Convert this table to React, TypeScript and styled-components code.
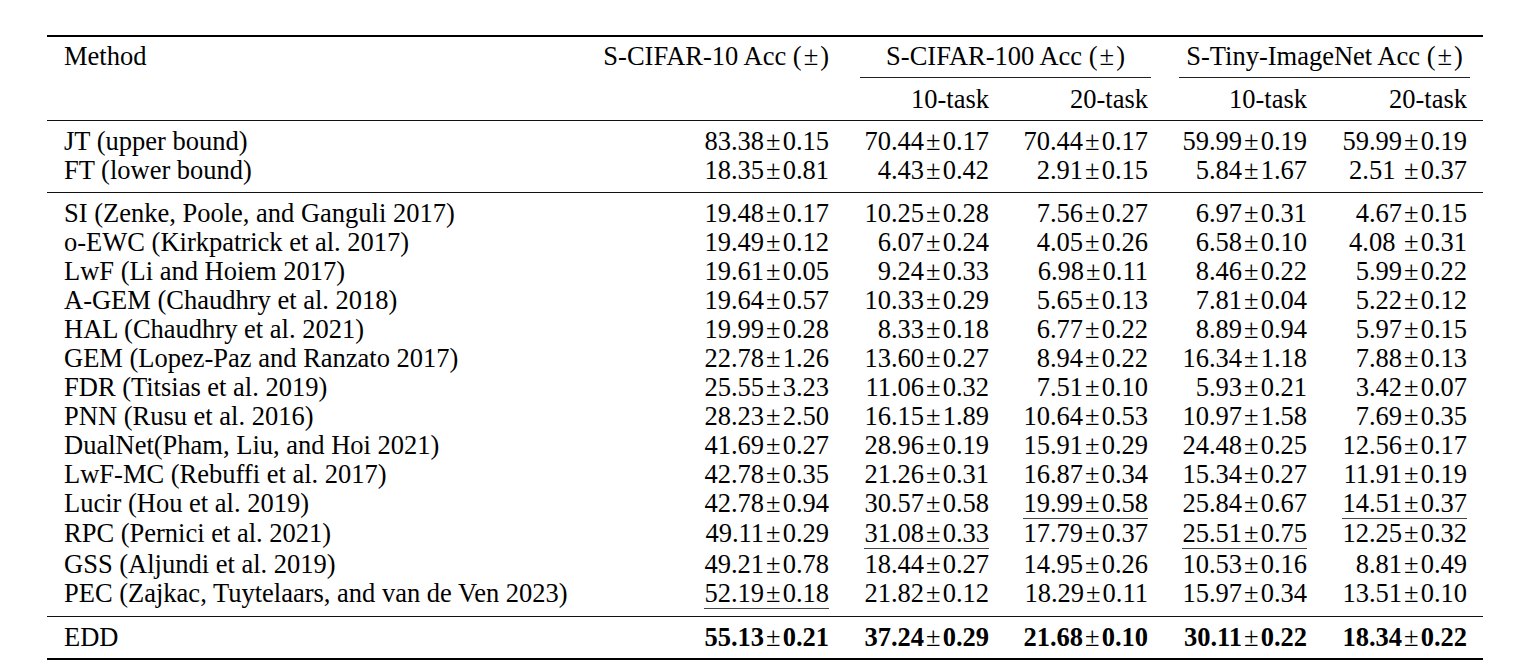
import React from "react";
import styled, { createGlobalStyle } from "styled-components";

const GlobalStyle = createGlobalStyle`
    html, body {
        margin: 0;
        padding: 0;
        background: #ffffff;
        font-family: "Liberation Serif", "Times New Roman", serif;
    }
`;

const Page = styled.div`
    padding: 35px 0 0 47px;
`;

const Table = styled.table`
    width: 1436px;
    table-layout: fixed;
    border-collapse: separate;
    border-spacing: 0;
    font-family: "Liberation Serif", "Times New Roman", serif;
    font-size: 26.5px;
    color: #000;

    th,
    td {
        font-family: "Liberation Serif", "Times New Roman", serif;
        font-size: 26.5px;
    }
`;

const HeadCell = styled.th<{ $align?: string }>`
    font-weight: normal;
    text-align: ${p => p.$align || "right"};
    padding: 0 16px 0 ${p => (p.$align === "left" ? "17px" : "16px")};
    vertical-align: top;
    white-space: nowrap;
`;

const GroupCell = styled.th`
    font-weight: normal;
    padding: 0;
    vertical-align: top;
`;

const TopRow = styled.tr`
    th {
        border-top: 2px solid #000;
        height: 41px;
        line-height: 38px;
    }
`;

const SubRow = styled.tr`
    th {
        border-bottom: 1px solid #111;
        height: 42px;
        line-height: 42px;
    }
`;

const GroupTitle = styled.div`
    text-align: center;
    line-height: 38px;
    padding-bottom: 2px;
    margin: 0 13px 0 15px;
    border-bottom: 1px solid #222;
    white-space: nowrap;
`;

const Body = styled.tbody<{ $last?: boolean }>`
    tr:first-child td {
        padding-top: 6px;
    }
    tr:last-child td {
        padding-bottom: ${p => (p.$last ? "6px" : "7px")};
        border-bottom: ${p => (p.$last ? "2px solid #000" : "1px solid #111")};
    }
`;

const Row = styled.tr<{ $extra?: number }>`
    td {
        height: ${p => 29 + (p.$extra || 0)}px;
        line-height: 29px;
        vertical-align: top;
    }
`;

const MethodCell = styled.td`
    padding: 0 0 0 17px;
    text-align: left;
    white-space: nowrap;
`;

const NumCell = styled.td<{ $bold?: boolean }>`
    padding: 0 16px 0 0;
    text-align: right;
    white-space: pre;
    font-weight: ${p => (p.$bold ? "bold" : "normal")};
`;

const Under = styled.span`
    display: inline-block;
    line-height: 29px;
    height: 29px;
    border-bottom: 1px solid #444;
`;

// TeX's math ± sits a little wider than the text glyph
const Pm = styled.span`
    font-weight: normal;
    padding: 0 2px;
`;

type Entry = { v: string; u?: boolean };
type RowData = { name: string; vals: Entry[]; extra?: number };

const e = (v: string, u?: boolean): Entry => ({ v, u });

const bounds: RowData[] = [
    {
        name: "JT (upper bound)",
        vals: [e("83.38±0.15"), e("70.44±0.17"), e("70.44±0.17"), e("59.99±0.19"), e("59.99±0.19")]
    },
    {
        name: "FT (lower bound)",
        vals: [e("18.35±0.81"), e("4.43±0.42"), e("2.91±0.15"), e("5.84±1.67"), e("2.51 ±0.37")]
    }
];

const methods: RowData[] = [
    {
        name: "SI (Zenke, Poole, and Ganguli 2017)",
        vals: [e("19.48±0.17"), e("10.25±0.28"), e("7.56±0.27"), e("6.97±0.31"), e("4.67±0.15")]
    },
    {
        name: "o-EWC (Kirkpatrick et al. 2017)",
        vals: [e("19.49±0.12"), e("6.07±0.24"), e("4.05±0.26"), e("6.58±0.10"), e("4.08 ±0.31")]
    },
    {
        name: "LwF (Li and Hoiem 2017)",
        vals: [e("19.61±0.05"), e("9.24±0.33"), e("6.98±0.11"), e("8.46±0.22"), e("5.99±0.22")]
    },
    {
        name: "A-GEM (Chaudhry et al. 2018)",
        vals: [e("19.64±0.57"), e("10.33±0.29"), e("5.65±0.13"), e("7.81±0.04"), e("5.22±0.12")]
    },
    {
        name: "HAL (Chaudhry et al. 2021)",
        vals: [e("19.99±0.28"), e("8.33±0.18"), e("6.77±0.22"), e("8.89±0.94"), e("5.97±0.15")]
    },
    {
        name: "GEM (Lopez-Paz and Ranzato 2017)",
        vals: [e("22.78±1.26"), e("13.60±0.27"), e("8.94±0.22"), e("16.34±1.18"), e("7.88±0.13")]
    },
    {
        name: "FDR (Titsias et al. 2019)",
        vals: [e("25.55±3.23"), e("11.06±0.32"), e("7.51±0.10"), e("5.93±0.21"), e("3.42±0.07")]
    },
    {
        name: "PNN (Rusu et al. 2016)",
        vals: [e("28.23±2.50"), e("16.15±1.89"), e("10.64±0.53"), e("10.97±1.58"), e("7.69±0.35")]
    },
    {
        name: "DualNet(Pham, Liu, and Hoi 2021)",
        vals: [e("41.69±0.27"), e("28.96±0.19"), e("15.91±0.29"), e("24.48±0.25"), e("12.56±0.17")]
    },
    {
        name: "LwF-MC (Rebuffi et al. 2017)",
        vals: [e("42.78±0.35"), e("21.26±0.31"), e("16.87±0.34"), e("15.34±0.27"), e("11.91±0.19")]
    },
    {
        name: "Lucir (Hou et al. 2019)",
        extra: 1,
        vals: [e("42.78±0.94"), e("30.57±0.58"), e("19.99±0.58", true), e("25.84±0.67"), e("14.51±0.37", true)]
    },
    {
        name: "RPC (Pernici et al. 2021)",
        extra: 2,
        vals: [e("49.11±0.29"), e("31.08±0.33", true), e("17.79±0.37"), e("25.51±0.75", true), e("12.25±0.32")]
    },
    {
        name: "GSS (Aljundi et al. 2019)",
        vals: [e("49.21±0.78"), e("18.44±0.27"), e("14.95±0.26"), e("10.53±0.16"), e("8.81±0.49")]
    },
    {
        name: "PEC (Zajkac, Tuytelaars, and van de Ven 2023)",
        extra: 1,
        vals: [e("52.19±0.18", true), e("21.82±0.12"), e("18.29±0.11"), e("15.97±0.34"), e("13.51±0.10")]
    }
];

const ours: RowData = {
    name: "EDD",
    vals: [e("55.13±0.21"), e("37.24±0.29"), e("21.68±0.10"), e("30.11±0.22"), e("18.34±0.22")]
};

function Value(props: { entry: Entry; bold?: boolean }) {
    let [a, b] = props.entry.v.split("±");
    let content = (
        <>
            {a}
            <Pm>±</Pm>
            {b}
        </>
    );
    return (
        <NumCell $bold={props.bold}>
            {props.entry.u ? <Under>{content}</Under> : content}
        </NumCell>
    );
}

function DataRow(props: { row: RowData; bold?: boolean }) {
    return (
        <Row $extra={props.row.extra}>
            <MethodCell>{props.row.name}</MethodCell>
            {props.row.vals.map((v, i) => (
                <Value entry={v} bold={props.bold} key={i} />
            ))}
        </Row>
    );
}

function Acc(props: { name: string }) {
    return (
        <>
            {props.name} Acc (<Pm>±</Pm>)
        </>
    );
}

function App() {
    return (
        <Page>
            <GlobalStyle />
            <Table>
                <colgroup>
                    <col style={{ width: 537 }} />
                    <col style={{ width: 261 }} />
                    <col style={{ width: 160 }} />
                    <col style={{ width: 159 }} />
                    <col style={{ width: 159 }} />
                    <col style={{ width: 160 }} />
                </colgroup>
                <thead>
                    <TopRow>
                        <HeadCell $align="left">Method</HeadCell>
                        <HeadCell>
                            <Acc name="S-CIFAR-10" />
                        </HeadCell>
                        <GroupCell colSpan={2}>
                            <GroupTitle>
                                <Acc name="S-CIFAR-100" />
                            </GroupTitle>
                        </GroupCell>
                        <GroupCell colSpan={2}>
                            <GroupTitle>
                                <Acc name="S-Tiny-ImageNet" />
                            </GroupTitle>
                        </GroupCell>
                    </TopRow>
                    <SubRow>
                        <HeadCell $align="left"></HeadCell>
                        <HeadCell></HeadCell>
                        <HeadCell>10-task</HeadCell>
                        <HeadCell>20-task</HeadCell>
                        <HeadCell>10-task</HeadCell>
                        <HeadCell>20-task</HeadCell>
                    </SubRow>
                </thead>
                <Body>
                    {bounds.map((r, i) => (
                        <DataRow row={r} key={i} />
                    ))}
                </Body>
                <Body>
                    {methods.map((r, i) => (
                        <DataRow row={r} key={i} />
                    ))}
                </Body>
                <Body $last>
                    <DataRow row={ours} bold />
                </Body>
            </Table>
        </Page>
    );
}

export default App;
